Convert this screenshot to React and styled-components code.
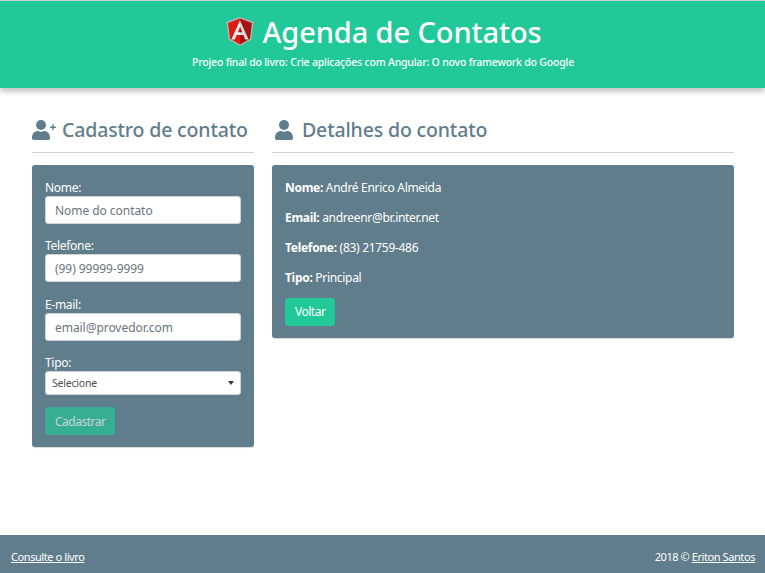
import React from "react";
import styled, { createGlobalStyle } from "styled-components";

const Global = createGlobalStyle`
  html, body { margin: 0; padding: 0; background: #fff; }
  body { font-family: "Noto Sans", "Open Sans", sans-serif; font-size: 12px; letter-spacing: -0.3px; color: #fff; }
  * { box-sizing: border-box; }
`;
const Page = styled.div`
  height: 573px; display: flex; flex-direction: column; overflow: hidden;
`;
const Header = styled.header`
  height: 88px; flex: none; background: #20c997; border-top: 1px solid #c8cfcc;
  box-shadow: 0 4px 5px rgba(0,0,0,.22); display: flex; flex-direction: column; align-items: center; padding: 12px 0 0 3px;
`;
const Title = styled.h1`
  margin: 0; font-size: 29px; line-height: 37px; font-weight: 500; letter-spacing: -0.1px; display: flex; align-items: center; gap: 8px;
`;
const Subtitle = styled.p`
  margin: 5px 0 0 -2px; font-size: 10.5px; line-height: 15px; font-weight: 500; letter-spacing: -0.2px;
`;
const Main = styled.main`
  flex: 1; display: grid; grid-template-columns: 222px 462px; column-gap: 18px; padding: 27px 31px 0 32px; align-items: start;
`;
const Heading = styled.h2`
  margin: 0; height: 38px; border-bottom: 1px solid #cfd2d4; color: #607d8b; font-size: 19.5px; line-height: 30px; font-weight: 500;
  letter-spacing: -0.15px; white-space: nowrap; display: flex; align-items: flex-start;
`;
const IconSlot = styled.span`
  flex: none; width: 30px; height: 30px; display: flex; align-items: center; justify-content: ${p => (p.$center ? "center" : "flex-start")};
  padding-right: ${p => (p.$center ? "6px" : "0")};
`;
const Card = styled.section`
  margin-top: 12px; background: #607d8b; border-radius: 3px; padding: 14.5px 13px 12px;
  box-shadow: 0 1px 1px rgba(0,0,0,.15);
`;
const Field = styled.div`
  margin-bottom: ${p => (p.$last ? "12px" : "14.5px")};
`;
const Label = styled.label`
  display: block; height: 16px; line-height: 16px;
`;
const Input = styled.input`
  display: block; width: 100%; height: 28px; border: 1px solid #ced4da; border-radius: 3px; background: #fff; padding: 1px 9px 0;
  font: inherit; font-size: 12px; letter-spacing: -0.05px;
  &::placeholder { color: #6c757d; opacity: 1; }
`;
const SelectBox = styled.div`
  height: 24px; background: #fff; border: 1px solid #ced4da; border-radius: 3px; color: #495057; font-size: 10.5px; letter-spacing: -0.2px;
  display: flex; align-items: center; justify-content: space-between; padding: 0 6px;
`;
const Caret = styled.span`
  width: 0; height: 0; border-left: 3.5px solid transparent; border-right: 3.5px solid transparent; border-top: 4px solid #343a40;
`;
const Button = styled.button`
  display: block; height: 28px; padding: 0 10px; border: 0; border-radius: 3px; background: #20c997; color: #fff; font: inherit; font-size: 12px;
  letter-spacing: -0.5px; opacity: ${p => (p.disabled ? 0.65 : 1)};
`;
const Detail = styled.p`
  margin: 0 0 14px; line-height: 16px;
  strong { font-weight: 700; }
  &:nth-of-type(4) { margin-bottom: 12px; }
`;
const Footer = styled.footer`
  height: 38px; flex: none; background: #607d8b; display: flex; align-items: center; justify-content: space-between; padding: 4px 10px 0 11px;
  font-size: 11px; letter-spacing: -0.42px;
  a { color: #fff; text-decoration: underline; }
`;

const Angular = () => (
  <svg width="28" height="29" viewBox="0 0 28 29">
    <path d="M14 0 L0.5 4.8 L2.6 22.6 L14 29 L25.4 22.6 L27.5 4.8 Z" fill="#b3b3b3" />
    <path d="M14 1.6 L14 27.4 L24 21.7 L25.9 6 Z" fill="#a6120d" />
    <path d="M14 1.6 L2.1 6 L4 21.7 L14 27.4 Z" fill="#dd1b16" />
    <path d="M14 3.4 L5.4 22.4 H8.8 L10.6 18 H14 V15.2 H11.8 L14 9.8 Z" fill="#f2f2f2" />
    <path d="M14 3.4 L22.6 22.4 H19.2 L17.4 18 H14 V15.2 H16.2 L14 9.8 Z" fill="#d9d9d9" />
  </svg>
);
const User = ({ plus }) => (
  <svg width={plus ? 25 : 18} height="20" viewBox={plus ? "0 0 25 20" : "0 0 18 20"}>
    <circle cx="9" cy="5" r="5" fill="#607d8b" />
    <path d="M0 17.6 C0 13.6 2.8 11 6 11 C7.5 12 10.5 12 12 11 C15.2 11 18 13.6 18 17.6 V18.3 C18 19.4 17.2 20 16.3 20 H1.7 C0.8 20 0 19.4 0 18.3 Z" fill="#607d8b" />
    {plus && <path d="M21 4.2 V10.2 M18 7.2 H24" stroke="#607d8b" strokeWidth="1.4" />}
  </svg>
);

export default function App() {
  return (
    <Page>
      <Global />
      <Header>
        <Title><Angular />Agenda de Contatos</Title>
        <Subtitle>Projeo final do livro: Crie aplicações com Angular: O novo framework do Google</Subtitle>
      </Header>
      <Main>
        <div>
          <Heading><IconSlot><User plus /></IconSlot>Cadastro de contato</Heading>
          <Card>
            <Field><Label>Nome:</Label><Input placeholder="Nome do contato" /></Field>
            <Field><Label>Telefone:</Label><Input placeholder="(99) 99999-9999" /></Field>
            <Field><Label>E-mail:</Label><Input placeholder="email@provedor.com" /></Field>
            <Field $last><Label>Tipo:</Label><SelectBox>Selecione<Caret /></SelectBox></Field>
            <Button disabled>Cadastrar</Button>
          </Card>
        </div>
        <div>
          <Heading><IconSlot $center><User /></IconSlot>Detalhes do contato</Heading>
          <Card>
            <Detail><strong>Nome:</strong> André Enrico Almeida</Detail>
            <Detail><strong>Email:</strong> andreenr@br.inter.net</Detail>
            <Detail><strong>Telefone:</strong> (83) 21759-486</Detail>
            <Detail><strong>Tipo:</strong> Principal</Detail>
            <Button>Voltar</Button>
          </Card>
        </div>
      </Main>
      <Footer>
        <a href="#livro">Consulte o livro</a>
        <span>2018 © <a href="#autor">Eriton Santos</a></span>
      </Footer>
    </Page>
  );
}
